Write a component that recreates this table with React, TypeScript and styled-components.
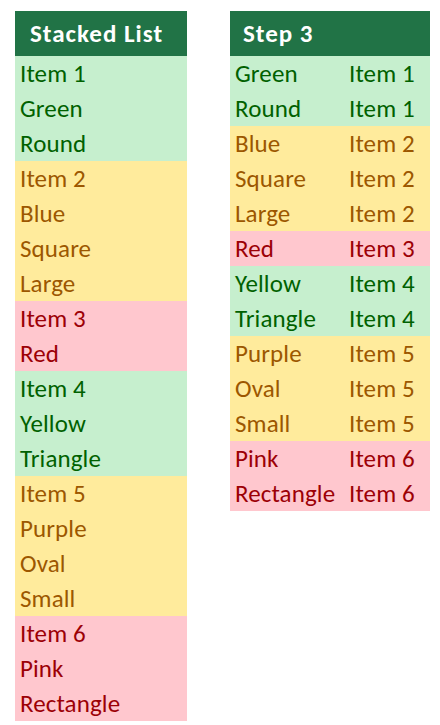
import React from "react";
import styled, { createGlobalStyle } from "styled-components";

type Tone = "good" | "neutral" | "bad";

const stacked: Array<[string, Tone]> = [
    ["Item 1", "good"], ["Green", "good"], ["Round", "good"],
    ["Item 2", "neutral"], ["Blue", "neutral"], ["Square", "neutral"], ["Large", "neutral"],
    ["Item 3", "bad"], ["Red", "bad"],
    ["Item 4", "good"], ["Yellow", "good"], ["Triangle", "good"],
    ["Item 5", "neutral"], ["Purple", "neutral"], ["Oval", "neutral"], ["Small", "neutral"],
    ["Item 6", "bad"], ["Pink", "bad"], ["Rectangle", "bad"],
];

const step3: Array<[string, string, Tone]> = [
    ["Green", "Item 1", "good"], ["Round", "Item 1", "good"],
    ["Blue", "Item 2", "neutral"], ["Square", "Item 2", "neutral"], ["Large", "Item 2", "neutral"],
    ["Red", "Item 3", "bad"],
    ["Yellow", "Item 4", "good"], ["Triangle", "Item 4", "good"],
    ["Purple", "Item 5", "neutral"], ["Oval", "Item 5", "neutral"], ["Small", "Item 5", "neutral"],
    ["Pink", "Item 6", "bad"], ["Rectangle", "Item 6", "bad"],
];

// Excel 기본 셀 스타일 색상
const fills: Record<Tone, string> = { good: "#c6efce", neutral: "#ffeb9c", bad: "#ffc7ce" };
const inks: Record<Tone, string> = { good: "#006100", neutral: "#9c5700", bad: "#9c0006" };

export default function App() {
    return (
        <>
            <GlobalStyle />
            <Sheet>
                <Table $width={172}>
                    <Header $pad={15}>Stacked List</Header>
                    {stacked.map(([text, tone], i) => (
                        <Row key={i} $tone={tone} $cols="1fr">
                            <Cell>{text}</Cell>
                        </Row>
                    ))}
                </Table>
                <Table $width={200}>
                    <Header $pad={13}>Step 3</Header>
                    {step3.map(([a, b, tone], i) => (
                        <Row key={i} $tone={tone} $cols="116px 1fr">
                            <Cell>{a}</Cell>
                            <Cell $pad={3}>{b}</Cell>
                        </Row>
                    ))}
                </Table>
            </Sheet>
        </>
    );
}

const GlobalStyle = createGlobalStyle`
body {
    margin: 0;
    background: #fff;
    font-family: Carlito, Lato, "Open Sans", sans-serif;
}
`;

const Sheet = styled.div`
display: flex;
align-items: flex-start;
gap: 43px;
padding: 11px 0 0 15px;
`;

const Table = styled.div<{ $width: number }>`
display: flex;
flex-direction: column;
width: ${(p) => p.$width}px;
`;

const Header = styled.div<{ $pad: number }>`
height: 45px;
display: flex;
align-items: center;
padding-left: ${(p) => p.$pad}px;
box-sizing: border-box;

background-color: #217346;
color: #fff;

font-size: 25px;
font-weight: bold;
letter-spacing: 1px;
white-space: nowrap;
`;

const Row = styled.div<{ $tone: Tone; $cols: string }>`
display: grid;
grid-template-columns: ${(p) => p.$cols};
height: 35px;
align-items: center;

background-color: ${(p) => fills[p.$tone]};
color: ${(p) => inks[p.$tone]};
`;

const Cell = styled.div<{ $pad?: number }>`
padding-left: ${(p) => p.$pad ?? 5}px;
font-size: 25px;
letter-spacing: 0.1px;
white-space: nowrap;
`;
